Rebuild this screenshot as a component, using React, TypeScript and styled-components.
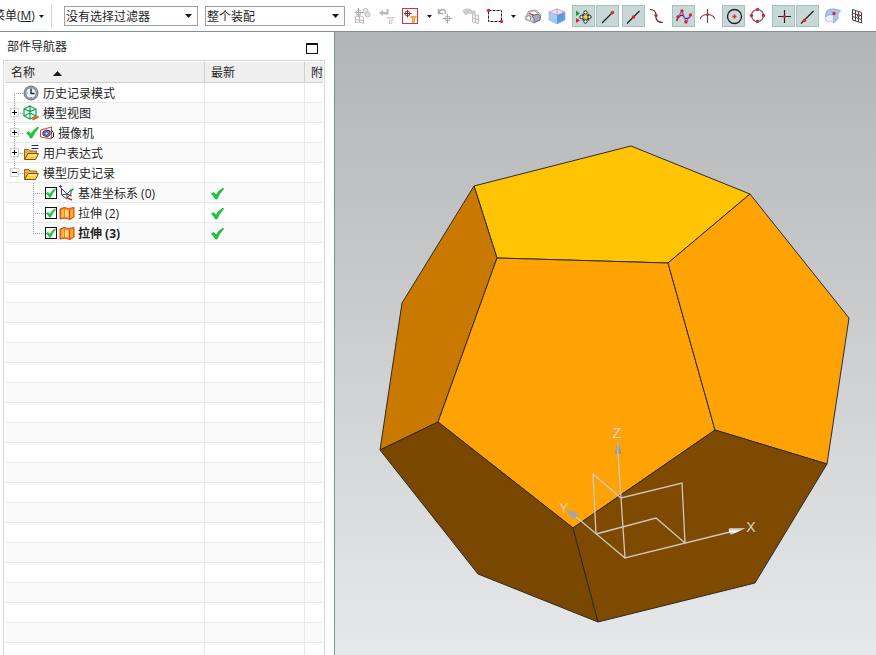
import React, { useState } from "react";
import styled, { createGlobalStyle } from "styled-components";

const GlobalStyle = createGlobalStyle`
  * { box-sizing: border-box; }
  body {
    margin: 0;
    background: #ffffff;
    color: #1e1e1e;
    font: 12px/18px "Open Sans", "Noto Sans CJK SC", sans-serif;
  }
  button, select, input { font: inherit; color: inherit; margin: 0; }
`;

const Window = styled.div`
  display: flex;
  flex-direction: column;
  height: 100vh;
  overflow: hidden;
`;

/* ---------- toolbar ---------- */

const Toolbar = styled.header`
  display: flex;
  align-items: center;
  flex: none;
  height: 32px;
  padding-top: 1px;
  border-bottom: 1px solid #7f9194;
  background: #ffffff;
  overflow: hidden;
`;

const MenuButton = styled.button`
  display: flex;
  align-items: center;
  gap: 4px;
  flex: none;
  margin-left: -7px;
  padding: 0;
  border: 0;
  background: none;
  white-space: nowrap;
`;

const Divider = styled.span`
  width: 1px;
  height: 24px;
  margin: 0 12px 0 7px;
  background: #d4d4d4;
`;

const SelectBox = styled.label<{ $width: number }>`
  display: grid;
  flex: none;
  align-items: center;
  width: ${(p) => p.$width}px;
  height: 20px;
  margin-right: 7px;
  & > * { grid-area: 1 / 1; }
  & > svg { justify-self: end; margin-right: 6px; pointer-events: none; }
`;

const Select = styled.select`
  appearance: none;
  width: 100%;
  height: 20px;
  padding: 1px 20px 0 1px;
  border: 1px solid #a0a0a0;
  border-radius: 0;
  background: #ffffff;
  line-height: 18px;
`;

const ToolGroup = styled.div`
  display: flex;
  flex: none;
  gap: 1px;
  margin-right: 3px;
`;

const ToolButton = styled.button<{ $on?: boolean; $narrow?: boolean }>`
  display: grid;
  place-items: center;
  width: ${(p) => (p.$narrow ? 11 : 23)}px;
  height: 22px;
  padding: 0;
  border: 0;
  background: ${(p) => (p.$on ? "#c8d8d6" : "transparent")};
  box-shadow: ${(p) => (p.$on ? "inset 0 0 0 1px #a3c1bd" : "none")};
`;

const Caret = ({ small }: { small?: boolean }) => (
  <svg width={small ? 5 : 7} height={small ? 3 : 4} viewBox="0 0 7 4" aria-hidden="true">
    <path d="M0 0H7L3.5 4Z" fill="#1a1a1a" />
  </svg>
);

const Icon = ({ children }: { children: React.ReactNode }) => (
  <svg width="23" height="22" viewBox="0 0 23 22" fill="none" aria-hidden="true">
    {children}
  </svg>
);

const RED = "#e0242c";

const Dot = ({ x, y, r = 2 }: { x: number; y: number; r?: number }) => (
  <circle cx={x} cy={y} r={r} fill={RED} />
);

type Tool = { name: string; on?: boolean; narrow?: boolean; icon: React.ReactNode };

const groups: Tool[][] = [
  [
    {
      name: "选择组件",
      icon: (
        <Icon>
          <g stroke="#bdbdbd">
            <path d="M3.500 11.500L7.500 10.500L11.500 12V18.500L7.500 17L3.500 17.500ZM3.500 14.500L11.500 15.500M7.500 10.500V17" />
            <path d="M6.500 3V12M2.500 7.500H11" stroke="#a6a6a6" />
            <circle cx="6.500" cy="7.500" r="2.500" />
            <circle cx="13.500" cy="6" r="2.500" fill="#e9e9e9" />
            <circle cx="15.500" cy="9.500" r="2.500" fill="#e2e2e2" />
          </g>
        </Icon>
      ),
    },
    {
      name: "还原过滤",
      icon: (
        <Icon>
          <path d="M3 8L7 5V7H10.500V4H12.500V9.500H7V11Z" fill="#b9b9b9" />
          <path d="M11 12.500H18.500L16 15V18.500H13.500V15Z" fill="#ececec" stroke="#cccccc" />
        </Icon>
      ),
    },
    {
      name: "选择过滤器",
      icon: (
        <Icon>
          <rect x="2.500" y="3.500" width="15" height="15" fill="#fff8f7" stroke="#cf3545" />
          <circle cx="7.500" cy="8.500" r="2.500" stroke="#a04450" />
          <path d="M7.500 5V12.500M4 8.500H11.500" stroke="#55404a" />
          <path d="M10 11.500H16.500L14.500 14V17.500H12.500V14Z" fill="#f2b43c" stroke="#cf9130" strokeWidth=".6" />
        </Icon>
      ),
    },
    { name: "过滤器选项", narrow: true, icon: <Caret small /> },
    {
      name: "撤销选择",
      icon: (
        <Icon>
          <path d="M2.500 4V8.500H7M3 8Q4 4.500 7 4.500Q10 5 9.500 9" stroke="#a9a9a9" strokeWidth="1.500" />
          <circle cx="11.500" cy="13.500" r="2.500" stroke="#b3b3b3" />
          <path d="M11.500 9V18.500M6.500 13.500H16.500" stroke="#a9a9a9" />
        </Icon>
      ),
    },
    {
      name: "查找组件",
      icon: (
        <Icon>
          <path d="M3 5.500L6 4L10 4L12 6H15V8.500H11L8 8L6 10L4 8Z" fill="#cdcdcd" stroke="#bfbfbf" strokeWidth=".7" />
          <path d="M12.500 9.500L18.500 10.500V18.500L12.500 17ZM15.500 10V18M12.500 13L18.500 14.500" fill="#f3f3f3" stroke="#bfbfbf" />
        </Icon>
      ),
    },
    {
      name: "矩形选择",
      icon: (
        <Icon>
          <rect x="4.500" y="5.500" width="13" height="11" stroke="#222" strokeDasharray="3 1" />
          <Dot x={4.5} y={5.5} r={1.7} />
          <Dot x={17.5} y={16.5} r={1.7} />
        </Icon>
      ),
    },
    { name: "选择方式选项", narrow: true, icon: <Caret small /> },
  ],
  [
    {
      name: "选择面",
      icon: (
        <Icon>
          <path d="M3 13L7 6L14 5L19 10L18 15L12 18L8 16L4 15Z" fill="#ccd1d8" stroke="#868c94" strokeWidth=".8" />
          <path d="M7 7L13 6L16 9L10 10.500Z" fill="#fff" stroke="#989ea7" strokeWidth=".6" />
          <path d="M10 11L16 9L18 11V15L12 17.500V13Z" fill="#a5aeb8" stroke="#555e68" strokeWidth=".7" />
          <path d="M7 8.500L12 10" stroke={RED} strokeWidth="1.300" />
          <path d="M4 12Q7 9 9 12L8 16" stroke="#70767e" strokeWidth=".8" fill="#edf0f3" />
        </Icon>
      ),
    },
    {
      name: "选择体",
      icon: (
        <Icon>
          <path d="M3 7L11 10V19L3 15Z" fill="#a3cdf5" />
          <path d="M19 7L11 10V19L19 15Z" fill="#5b9be0" />
          <path d="M3 7L11 4L19 7L11 10Z" fill="#d9e5f8" />
          <path d="M11 3.500V10M3 7L11 10L19 7M3 7L11 4L19 7" stroke="#d48298" strokeWidth=".7" />
          <path d="M3 7V15L11 19L19 15V7" stroke="#87b2e5" strokeWidth=".7" />
        </Icon>
      ),
    },
  ],
  [
    {
      name: "启用捕捉点",
      on: true,
      icon: (
        <Icon>
          <path d="M4 5.500L8 8.500L4 11Z" fill="#10a832" />
          <path d="M4 13L8 15.500L4 18Z" fill={RED} />
          <path d="M10.500 9L17 15.500M17 9L10.500 15.500" stroke="#333" strokeWidth="1.500" />
          <g fill="#eef3f2" stroke="#252525">
            <circle cx="13.500" cy="7.500" r="1.700" />
            <circle cx="13.500" cy="16.500" r="1.700" />
            <circle cx="9.500" cy="12" r="1.700" />
            <circle cx="17.500" cy="12" r="1.700" />
          </g>
          <circle cx="13.500" cy="12" r="2" fill="#ffd820" />
        </Icon>
      ),
    },
    {
      name: "端点",
      on: true,
      icon: (
        <Icon>
          <path d="M6 18L16 8" stroke="#222" strokeWidth="1.200" />
          <Dot x={16.5} y={7.5} r={1.7} />
        </Icon>
      ),
    },
  ],
  [
    {
      name: "中点",
      on: true,
      icon: (
        <Icon>
          <path d="M5 18.500L17.500 6" stroke="#222" strokeWidth="1.200" />
          <Dot x={11.5} y={12} r={1.8} />
        </Icon>
      ),
    },
    {
      name: "控制点",
      icon: (
        <Icon>
          <path d="M4 4.500Q9 4.500 10 9V13Q11 17.500 17 17.500" stroke="#444" strokeWidth="1.200" />
          <Dot x={10} y={10.5} r={1.7} />
        </Icon>
      ),
    },
  ],
  [
    {
      name: "极点",
      on: true,
      icon: (
        <Icon>
          <path d="M5 16Q5 12 8 11Q11 9 12 12Q14 15 18 12" stroke="#222" strokeWidth="1.200" />
          <path d="M6 12L10 6L14 17L18.500 10" stroke="#9851d8" strokeWidth="1.300" />
          <Dot x={6} y={12} r={1.7} />
          <Dot x={10} y={6} r={1.7} />
          <Dot x={14} y={17} r={1.7} />
          <Dot x={18.5} y={10} r={1.7} />
        </Icon>
      ),
    },
    {
      name: "交点",
      icon: (
        <Icon>
          <path d="M4 14Q6 9.500 11.500 9.500T19 14M11.500 4V18" stroke="#555" strokeWidth="1.200" />
          <Dot x={11.5} y={9.5} r={1.5} />
        </Icon>
      ),
    },
  ],
  [
    {
      name: "圆弧中心",
      on: true,
      icon: (
        <Icon>
          <circle cx="12.500" cy="11.500" r="7" stroke="#222" strokeWidth="1.300" />
          <path d="M12.500 9.500V13.500M10.500 11.500H14.500" stroke={RED} strokeWidth="1.500" />
        </Icon>
      ),
    },
    {
      name: "象限点",
      icon: (
        <Icon>
          <circle cx="11.500" cy="10.500" r="6" stroke="#666" strokeWidth="1.200" />
          <Dot x={11.5} y={4.5} r={1.7} />
          <Dot x={11.5} y={16.5} r={1.7} />
          <Dot x={5.5} y={10.5} r={1.7} />
          <Dot x={17.5} y={10.5} r={1.7} />
        </Icon>
      ),
    },
  ],
  [
    {
      name: "现有点",
      on: true,
      icon: (
        <Icon>
          <path d="M12.500 5V18M6 11.500H19" stroke="#222" strokeWidth="1.200" />
          <Dot x={12.5} y={11.5} r={1.5} />
        </Icon>
      ),
    },
    {
      name: "曲线上的点",
      on: true,
      icon: (
        <Icon>
          <path d="M5 18.500L17.500 6" stroke="#222" strokeWidth="1.200" />
          <Dot x={8.5} y={15.5} r={1.7} />
        </Icon>
      ),
    },
  ],
  [
    {
      name: "面上的点",
      icon: (
        <Icon>
          <path d="M3.500 12Q3.500 4 9 4H13L18.500 5.500Q15 9 16 14L11.500 18V10Q7 8.500 3.500 12Z" fill="#a9c4ee" stroke="#8ca5d3" strokeWidth=".8" />
          <path d="M3.500 12Q7 8.500 11.500 10V18Q9 14.500 5.500 17Q3.500 15 3.500 12Z" fill="#e9f2ff" stroke="#8aa1cd" strokeWidth=".6" />
          <Dot x={12} y={8.5} r={1.7} />
        </Icon>
      ),
    },
    {
      name: "有界栅格点",
      icon: (
        <Icon>
          <path d="M6.500 4.500L15.500 7.500V18L6.500 15ZM9.500 5.500V16M12.500 6.500V17M6.500 8L15.500 11M6.500 11.500L15.500 14.500" stroke="#444" />
          <Dot x={12.5} y={10.5} r={1.5} />
        </Icon>
      ),
    },
  ],
];

/* ---------- navigator ---------- */

const Workspace = styled.div`
  display: flex;
  flex: 1;
  min-height: 0;
`;

const Navigator = styled.aside`
  display: flex;
  flex-direction: column;
  flex: none;
  width: 335px;
  border-right: 1px solid #7f9194;
  padding: 0 9px 0 3px;
  overflow: hidden;
`;

const TitleBar = styled.div`
  display: flex;
  align-items: center;
  justify-content: space-between;
  flex: none;
  height: 28px;
  padding: 2px 7px 0 4px;
`;

const Title = styled.h1`
  margin: 0;
  font-size: 12px;
  font-weight: 400;
`;

const RestoreButton = styled.button`
  width: 12px;
  height: 11px;
  margin-top: 2px;
  padding: 0;
  border: 1px solid #111;
  border-top-width: 2px;
  background: #fff;
`;

const TreeFrame = styled.div`
  flex: 1;
  min-height: 0;
  padding: 1px 1px 0;
  border: 1px solid #d9d9d9;
  border-bottom: 0;
  overflow: hidden;
`;

const TreeTable = styled.table`
  width: 100%;
  table-layout: fixed;
  border-collapse: separate;
  border-spacing: 0;
`;

const HeadCell = styled.th<{ $width?: number }>`
  width: ${(p) => (p.$width ? `${p.$width}px` : "auto")};
  height: 21px;
  padding: 2px 0 0 6px;
  border-right: 1px solid #d0d0d0;
  border-bottom: 1px solid #d0d0d0;
  background: #efefef;
  font-weight: 400;
  line-height: 18px;
  text-align: left;
  white-space: nowrap;
  overflow: hidden;
  &:last-child { border-right: 0; }
  & > svg { margin-left: 18px; vertical-align: 1px; }
`;

const Row = styled.tr`
  height: 20px;
  &:nth-child(even) { background: #fafafa; }
`;

const Cell = styled.td`
  height: 20px;
  padding: 0;
  border-right: 1px solid #e9e9e9;
  border-bottom: 1px solid #e9e9e9;
  &:last-child { border-right: 0; }
`;

const StatusCell = styled(Cell)`
  padding: 1px 0 0 6px;
  & > svg { display: block; }
`;

const NodeLine = styled.div`
  display: flex;
  align-items: center;
  height: 19px;
`;

/* A branch cell draws the dotted trunk on its left side and the stub to the node. */
const Branch = styled.span<{ $start?: boolean; $end?: boolean; $nested?: boolean }>`
  display: grid;
  align-items: center;
  flex: none;
  width: ${(p) => (p.$nested ? 12 : 9)}px;
  height: 20px;
  margin-left: ${(p) => (p.$nested ? 28 : 9)}px;
  background:
    repeating-linear-gradient(to bottom, #a4a4a4 0 1px, transparent 1px 2px) 0 ${(p) => (p.$start ? "10px" : "0")} / 1px ${(p) => (p.$start || p.$end ? "10px" : "20px")} no-repeat,
    repeating-linear-gradient(to right, #a4a4a4 0 1px, transparent 1px 2px) 0 10px / 100% 1px no-repeat;
`;

const Expander = styled.button`
  display: grid;
  place-items: center;
  width: 9px;
  height: 9px;
  margin-left: -4px;
  padding: 0;
  border: 1px solid #d2d2d2;
  background: #fff;
`;

const NodeIcon = styled.svg`
  flex: none;
  width: 16px;
  height: 16px;
`;

const NodeLabel = styled.span<{ $bold?: boolean; $wide?: boolean }>`
  margin-left: ${(p) => (p.$wide ? 4 : 3)}px;
  padding-top: 2px;
  font-weight: ${(p) => (p.$bold ? 700 : 400)};
  white-space: nowrap;
`;

const CheckField = styled.label`
  display: flex;
  align-items: center;
`;

const CheckWrap = styled.span`
  display: grid;
  place-items: center;
  margin-right: 2px;
  & > * { grid-area: 1 / 1; }
  & > svg { pointer-events: none; }
`;

const CheckBox = styled.input`
  appearance: none;
  width: 12px;
  height: 12px;
  border: 1px solid #111;
  background: #fff;
`;

const GreenCheck = ({ size = 13 }: { size?: number }) => (
  <svg width={size} height={size} viewBox="0 0 13 13" aria-hidden="true">
    <path d="M.5 7L2.500 5.500L5 8Q7.500 3.500 12 1L12.500 2Q8.500 6 6 12H4.500Q3 9 .5 7Z" fill="#12d036" stroke="#0b9d2a" strokeWidth=".6" />
  </svg>
);

const folder = (
  <>
    <path d="M1.500 14V4.500H5.500L7 6H13.500V9" fill="#e8b040" stroke="#94651f" />
    <path d="M1.500 14.500L5 8.500H15.500L12.500 14.500Z" fill="#ffcf3f" stroke="#7d5218" />
    <path d="M5.500 9.500H14L13 11H5Z" fill="#ffeb9c" />
  </>
);

const extrude = (
  <>
    <path d="M1 4L5 2.500Q9 4.500 15 2.500V12L11 14.500Q6 12 1 14Z" fill="#f57b21" stroke="#d8481a" />
    <path d="M2.500 5L5 4V12L2.500 12.500Z" fill="#ffc23e" />
    <path d="M6 4.500L9.500 5V12.500L6 12Z" fill="#ffe070" />
    <path d="M11.500 5L14 4V11.500L11.500 13Z" fill="#ffb636" />
    <path d="M10.500 5V14" stroke="#d8481a" />
  </>
);

const art: Record<string, React.ReactNode> = {
  clock: (
    <>
      <circle cx="8" cy="8" r="7" fill="#a0a6ad" stroke="#6d7277" />
      <circle cx="8" cy="8" r="5.200" fill="#eef4fa" stroke="#777" strokeWidth=".7" />
      <path d="M8 3.500V8.500H11.500" fill="none" stroke="#1b2a38" strokeWidth="1.400" />
      <path d="M8 12V13M3.500 8H4.500" stroke="#555" />
    </>
  ),
  views: (
    <>
      <path d="M7 1L13 4V11L7 14L1 11V4ZM1 4L7 6.500L13 4M7 1V14M1 11L7 8L13 11" fill="#f1fff6" stroke="#15a252" strokeWidth="1.200" />
      <path d="M9.500 14.500L15.500 11.500" stroke="#ef5228" strokeWidth="2" />
    </>
  ),
  camera: (
    <>
      <path d="M1.500 5L12.500 2V11L12 14L1.500 12Z" fill="#fff1ec" stroke="#d9482c" />
      <path d="M4 7L7 5L11 6V10L8 12L4 10Z" fill="#8e9ad0" stroke="#252f65" />
      <circle cx="7.500" cy="8.500" r="1.700" fill="#e8edff" stroke="#26336c" />
      <path d="M12.500 5L14.500 8V12L12 13" fill="none" stroke="#222" />
    </>
  ),
  expressions: (
    <>
      {folder}
      <path d="M8 0H16V5H8Z" fill="#fff" />
      <path d="M8.500 .5H15.500M8.500 3.500H15.500" stroke="#24247e" />
    </>
  ),
  folder,
  datum: (
    <>
      <path d="M2.500 3V10L8 14M3 4L8 9V13M3 10L8 9L13 11M8 9L12 5V9L8 13M8 9L5 6" fill="none" stroke="#444" />
      <path d="M0 1.500H3M1.500 0V3" stroke="#2737d7" />
      <path d="M11 6L14.500 4" stroke="#129847" strokeWidth="1.500" />
      <path d="M8.500 13L13 15" stroke="#d52434" strokeWidth="1.500" />
    </>
  ),
  extrude,
};

type TreeNode = {
  label: string;
  icon: keyof typeof art;
  expand?: "plus" | "minus";
  ticked?: boolean;
  feature?: boolean;
  bold?: boolean;
  start?: boolean;
  end?: boolean;
};

const nodes: TreeNode[] = [
  { label: "历史记录模式", icon: "clock", start: true },
  { label: "模型视图", icon: "views", expand: "plus" },
  { label: "摄像机", icon: "camera", expand: "plus", ticked: true },
  { label: "用户表达式", icon: "expressions", expand: "plus" },
  { label: "模型历史记录", icon: "folder", expand: "minus", end: true },
  { label: "基准坐标系 (0)", icon: "datum", feature: true },
  { label: "拉伸 (2)", icon: "extrude", feature: true },
  { label: "拉伸 (3)", icon: "extrude", feature: true, bold: true, end: true },
];

const EMPTY_ROWS = 40;

const Spacer = styled.span<{ $width: number }>`
  flex: none;
  width: ${(p) => p.$width}px;
`;

function NodeRow({ node }: { node: TreeNode }) {
  const [checked, setChecked] = useState(true);
  const glyph = (
    <NodeIcon viewBox="0 0 16 16" aria-hidden="true">
      {art[node.icon]}
    </NodeIcon>
  );
  return (
    <Row>
      <Cell>
        <NodeLine>
          <Branch $start={node.start} $end={node.end} $nested={node.feature}>
            {node.expand && (
              <Expander aria-label={node.label}>
                <svg width="5" height="5" viewBox="0 0 5 5" aria-hidden="true">
                  <path d={node.expand === "plus" ? "M0 2.500H5M2.500 0V5" : "M0 2.500H5"} stroke="#111" />
                </svg>
              </Expander>
            )}
          </Branch>
          {node.feature ? (
            <CheckField>
              <CheckWrap>
                <CheckBox type="checkbox" checked={checked} onChange={() => setChecked(!checked)} />
                {checked && <GreenCheck size={10} />}
              </CheckWrap>
              {glyph}
              <NodeLabel $bold={node.bold}>{node.label}</NodeLabel>
            </CheckField>
          ) : (
            <>
              {node.ticked ? (
                <>
                  <Spacer $width={3} />
                  <GreenCheck />
                </>
              ) : null}
              {glyph}
              <NodeLabel $wide={!node.ticked}>{node.label}</NodeLabel>
            </>
          )}
        </NodeLine>
      </Cell>
      <StatusCell>{node.feature && <GreenCheck />}</StatusCell>
      <Cell />
    </Row>
  );
}

/* ---------- 3D view ---------- */

const Viewport = styled.main`
  flex: 1;
  min-width: 0;
  background: linear-gradient(#b3b4b6, #e6e8ea);
  & > svg { display: block; width: 100%; height: 100%; }
`;

const AxisLabel = styled.text`
  font: 14px "Liberation Sans", sans-serif;
  fill: #d9d2d2;
  text-anchor: middle;
`;

const faces = [
  { points: "474,186 631,146 750,194 668,263 497,258", fill: "#ffc403" },
  { points: "474,186 497,258 438,422 380,450 402,303", fill: "#c97800" },
  { points: "497,258 668,263 715,430 573,528 438,422", fill: "#ffa304" },
  { points: "750,194 849,318 827,464 715,430 668,263", fill: "#ffa304" },
  { points: "380,450 438,422 573,528 598,622 478,574", fill: "#794700" },
  { points: "573,528 715,430 827,464 755,583 598,622", fill: "#7d4a00" },
];

function Model() {
  return (
    <svg viewBox="335 32 541 623" role="img" aria-label="十二面体">
      <defs>
        <linearGradient id="cone">
          <stop offset="0" stopColor="#85858a" />
          <stop offset=".5" stopColor="#b9b9be" />
          <stop offset="1" stopColor="#77777c" />
        </linearGradient>
        <linearGradient id="coneX" x2="0" y2="1">
          <stop offset="0" stopColor="#aaa" />
          <stop offset=".5" stopColor="#fff" />
          <stop offset="1" stopColor="#999" />
        </linearGradient>
      </defs>
      <g stroke="#2d2b30" strokeLinejoin="round">
        {faces.map((f) => (
          <polygon key={f.points} points={f.points} fill={f.fill} />
        ))}
      </g>
      <g fill="none" stroke="#d0c6c6" strokeWidth="1.300">
        <path d="M618 453L625 558L730 532M625 558L575 516" />
        <path d="M596 534L593 474L621 498L682 483L685 543L656 518L596 534" />
      </g>
      <path d="M618 439L621 453Q618 455 615 453Z" fill="url(#cone)" />
      <path d="M746 528L731 535Q728 532 729 528Z" fill="url(#coneX)" />
      <path d="M567 510L577 512Q579 518 572 519Z" fill="#a9a5a9" />
      <AxisLabel x="617" y="438">Z</AxisLabel>
      <AxisLabel x="564" y="513">Y</AxisLabel>
      <AxisLabel x="751" y="532">X</AxisLabel>
    </svg>
  );
}

export default function App() {
  return (
    <>
      <GlobalStyle />
      <Window>
        <Toolbar>
          <MenuButton>
            <span>
              菜单(<u>M</u>)
            </span>
            <Caret small />
          </MenuButton>
          <Divider />
          <SelectBox $width={134}>
            <Select aria-label="选择过滤器">
              <option>没有选择过滤器</option>
            </Select>
            <Caret />
          </SelectBox>
          <SelectBox $width={140}>
            <Select aria-label="选择范围">
              <option>整个装配</option>
            </Select>
            <Caret />
          </SelectBox>
          {groups.map((tools) => (
            <ToolGroup key={tools[0].name}>
              {tools.map((t) => (
                <ToolButton key={t.name} aria-label={t.name} aria-pressed={t.on} $on={t.on} $narrow={t.narrow}>
                  {t.icon}
                </ToolButton>
              ))}
            </ToolGroup>
          ))}
        </Toolbar>
        <Workspace>
          <Navigator>
            <TitleBar>
              <Title>部件导航器</Title>
              <RestoreButton aria-label="还原" />
            </TitleBar>
            <TreeFrame>
              <TreeTable>
                <thead>
                  <tr>
                    <HeadCell $width={200}>
                      名称
                      <svg width="9" height="5" viewBox="0 0 9 5" aria-hidden="true">
                        <path d="M0 5H9L4.500 0Z" fill="#1a1a1a" />
                      </svg>
                    </HeadCell>
                    <HeadCell $width={100}>最新</HeadCell>
                    <HeadCell>附</HeadCell>
                  </tr>
                </thead>
                <tbody>
                  {nodes.map((n) => (
                    <NodeRow key={n.label} node={n} />
                  ))}
                  {Array.from({ length: EMPTY_ROWS }, (_, i) => (
                    <Row key={i}>
                      <Cell />
                      <Cell />
                      <Cell />
                    </Row>
                  ))}
                </tbody>
              </TreeTable>
            </TreeFrame>
          </Navigator>
          <Viewport>
            <Model />
          </Viewport>
        </Workspace>
      </Window>
    </>
  );
}
